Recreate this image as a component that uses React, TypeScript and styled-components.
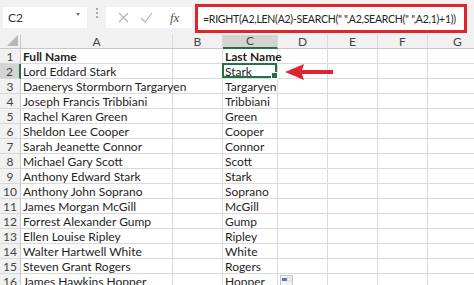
import React from "react";
import styled, { createGlobalStyle } from "styled-components";

const Global = createGlobalStyle`
  html, body { margin: 0; padding: 0; background: #ffffff; }
  body { font-family: Lato, "Open Sans", sans-serif; overflow: hidden; }
`;

const Page = styled.div`
  width: 474px;
  height: 285px;
  overflow: hidden;
  position: relative;
  background: #fff;
`;

const Toolbar = styled.div`
  height: 35px;
  background: #f1f1f1;
  display: flex;
  align-items: center;
  padding-left: 3px;
  box-sizing: border-box;
`;

const NameBox = styled.div`
  width: 84px;
  height: 21px;
  background: #fff;
  display: flex;
  align-items: center;
  justify-content: space-between;
  padding: 0 7px 0 5px;
  box-sizing: border-box;
  font-size: 12px;
  color: #333;
`;

const Caret = styled.span`
  width: 0;
  height: 0;
  border-left: 2.5px solid transparent;
  border-right: 2.5px solid transparent;
  border-top: 3px solid #777;
  margin-top: -6px;
`;

const Dots = styled.div`
  width: 19px;
  display: flex;
  flex-direction: column;
  align-items: center;
  gap: 2px;
  margin-top: -9px;
  span { width: 2px; height: 2px; background: #aaa; }
`;

const IconBox = styled.div`
  width: 86px;
  height: 21px;
  background: #fff;
  display: flex;
  align-items: center;
  box-sizing: border-box;
  padding-left: 12px;
  gap: 9px;
`;

const Fx = styled.span`
  font-family: "Liberation Serif", serif;
  font-style: italic;
  font-size: 13px;
  color: #555;
  margin-left: 8px;
`;

const FormulaBox = styled.div`
  margin-left: 3px;
  width: 272px;
  height: 29px;
  margin-top: 2px;
  border: 3px solid #e0242e;
  box-sizing: border-box;
  background: #fff;
  display: flex;
  align-items: center;
  padding-left: 5px;
  font-size: 10.5px;
  letter-spacing: -0.25px;
  color: #222;
  white-space: nowrap;
`;

const Sheet = styled.div`
  display: grid;
  grid-template-columns: 21px 152px 50px 55px 50px 50px 50px 60px;
  grid-template-rows: 14px;
  grid-auto-rows: 15px;
  position: relative;
`;

const ColHead = styled.div<{ $active?: boolean }>`
  background: ${(p) => (p.$active ? "#d3d3d3" : "#f1f1f1")};
  border-right: 1px solid #d8d8d8;
  border-bottom: ${(p) => (p.$active ? "2px solid #217346" : "1px solid #c8c8c8")};
  box-sizing: border-box;
  font-size: 12px;
  color: #444;
  display: flex;
  align-items: center;
  justify-content: center;
  line-height: 1;
`;

const Corner = styled.div`
  background: #f1f1f1;
  border-right: 1px solid #c8c8c8;
  border-bottom: 1px solid #c8c8c8;
  box-sizing: border-box;
  display: flex;
  align-items: flex-end;
  justify-content: flex-end;
  padding: 0 2px 2px 0;
`;

const RowHead = styled.div<{ $active?: boolean }>`
  background: ${(p) => (p.$active ? "#d3d3d3" : "#f1f1f1")};
  border-right: ${(p) => (p.$active ? "2px solid #217346" : "1px solid #c8c8c8")};
  border-bottom: 1px solid #d8d8d8;
  box-sizing: border-box;
  font-size: 12px;
  color: #444;
  display: flex;
  align-items: center;
  justify-content: center;
`;

const Cell = styled.div<{ $bold?: boolean }>`
  border-right: 1px solid #dadada;
  border-bottom: 1px solid #dadada;
  box-sizing: border-box;
  font-size: 12px;
  font-weight: ${(p) => (p.$bold ? 700 : 400)};
  color: #1e1e1e;
  padding-left: 2px;
  white-space: nowrap;
  overflow: visible;
  display: flex;
  align-items: center;
  position: relative;
`;

const Selection = styled.div`
  position: absolute;
  left: -1px;
  top: -1px;
  right: 0;
  bottom: 0;
  border: 2px solid #217346;
  pointer-events: none;
`;

const Handle = styled.div`
  position: absolute;
  right: -3px;
  bottom: -3px;
  width: 5px;
  height: 5px;
  background: #217346;
  border: 1px solid #fff;
`;

const Arrow = styled.svg`
  position: absolute;
  left: 285px;
  top: 28px;
`;

const QuickIcon = styled.svg`
  position: absolute;
  left: 280px;
  top: 240px;
`;

const names: [string, string][] = [
  ["Lord Eddard Stark", "Stark"],
  ["Daenerys Stormborn Targaryen", "Targaryen"],
  ["Joseph Francis Tribbiani", "Tribbiani"],
  ["Rachel Karen Green", "Green"],
  ["Sheldon Lee Cooper", "Cooper"],
  ["Sarah Jeanette Connor", "Connor"],
  ["Michael Gary Scott", "Scott"],
  ["Anthony Edward Stark", "Stark"],
  ["Anthony John Soprano", "Soprano"],
  ["James Morgan McGill", "McGill"],
  ["Forrest Alexander Gump", "Gump"],
  ["Ellen Louise Ripley", "Ripley"],
  ["Walter Hartwell White", "White"],
  ["Steven Grant Rogers", "Rogers"],
  ["James Hawkins Hopper", "Hopper"],
];

const cols = ["A", "B", "C", "D", "E", "F", "G"];

export default function App() {
  const rows: [string, string][] = [["Full Name", "Last Name"], ...names];
  return (
    <Page>
      <Global />
      <Toolbar>
        <NameBox>
          <span>C2</span>
          <Caret />
        </NameBox>
        <Dots>
          <span />
          <span />
          <span />
        </Dots>
        <IconBox>
          <svg width="11" height="11" viewBox="0 0 11 11">
            <path d="M1 1 L10 10 M10 1 L1 10" stroke="#b5b5b5" strokeWidth="1.2" fill="none" />
          </svg>
          <svg width="13" height="11" viewBox="0 0 13 11" style={{ marginLeft: 2 }}>
            <path d="M1 6 L5 10 L12 1" stroke="#b5b5b5" strokeWidth="1.2" fill="none" />
          </svg>
          <Fx>fx</Fx>
        </IconBox>
        <FormulaBox>=RIGHT(A2,LEN(A2)-SEARCH(" ",A2,SEARCH(" ",A2,1)+1))</FormulaBox>
      </Toolbar>
      <Sheet>
        <Corner>
          <svg width="11" height="11" viewBox="0 0 11 11">
            <path d="M11 0 L11 11 L0 11 Z" fill="#b8b8b8" />
          </svg>
        </Corner>
        {cols.map((c) => (
          <ColHead key={c} $active={c === "C"}>
            {c}
          </ColHead>
        ))}
        {rows.map((r, i) => (
          <React.Fragment key={i}>
            <RowHead $active={i === 1}>{i + 1}</RowHead>
            <Cell $bold={i === 0}>{r[0]}</Cell>
            <Cell />
            <Cell $bold={i === 0}>
              {r[1]}
              {i === 1 && (
                <Selection>
                  <Handle />
                </Selection>
              )}
            </Cell>
            <Cell />
            <Cell />
            <Cell />
            <Cell />
          </React.Fragment>
        ))}
        <Arrow width="50" height="18" viewBox="0 0 50 18">
          <path d="M0 9 L19 1 L17 7 L48 7 L48 11 L17 11 L19 17 Z" fill="#e0242e" />
        </Arrow>
        <QuickIcon width="14" height="12" viewBox="0 0 14 12">
          <rect x="0.5" y="0.5" width="12" height="11" fill="#f4f4f4" stroke="#c6c6c6" />
          <rect x="2" y="3" width="5" height="3" fill="#4a7ac8" />
          <rect x="7" y="3" width="4" height="3" fill="#fff" stroke="#9ab" strokeWidth="0.5" />
        </QuickIcon>
      </Sheet>
    </Page>
  );
}
